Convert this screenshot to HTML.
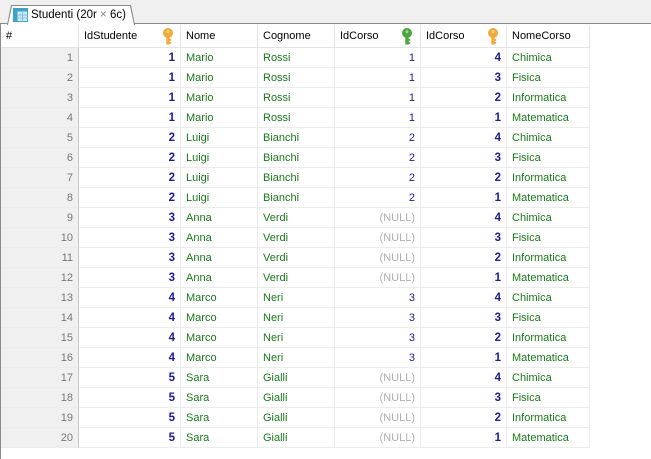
<!DOCTYPE html>
<html><head><meta charset="utf-8"><style>
*{margin:0;padding:0;box-sizing:border-box}
body{width:651px;height:459px;background:#fff;font-family:"Liberation Sans",Arial,sans-serif;font-size:11px;position:relative;overflow:hidden}
#top{position:absolute;left:0;top:0;width:651px;height:24px;background:#f0f0f0;border-bottom:1px solid #8a8a8a}
#tab{position:absolute;left:7px;top:5px;width:128px;height:20px;background:#8a8a8a;clip-path:polygon(4px 0,124px 0,128px 100%,0 100%)}
#tabb{position:absolute;left:8px;top:6px;width:126px;height:19px;background:#fff;clip-path:polygon(4px 0,122px 0,126px 100%,0 100%)}
#tabtxt{position:absolute;left:31px;top:9px;font-size:11.5px;color:#000}
#lb{position:absolute;left:0;top:24px;width:1px;height:435px;background:#8a8a8a}
.c{position:absolute;height:20px;line-height:20px;white-space:nowrap;overflow:hidden;border-right:1px solid #ececec;border-bottom:1px solid #ececec;padding:0 5px}
.h{line-height:22px;color:#000;border-right:1px solid #e4e4e4;border-bottom:1px solid #e4e4e4}
.rn{background:#f0f0f0;text-align:right;color:#777;border-right:1px solid #c8c8c8}
.num{text-align:right;color:#1a1a9a;font-weight:bold;font-size:11.5px}
.n2{text-align:right;color:#1a1a9a}
.g{color:#1a7a1a}
.nul{text-align:right;color:#b0b0b0}
</style></head><body>
<div id="top"></div>
<div id="tab"></div><div id="tabb"></div>
<svg style="position:absolute;left:13px;top:8px" width="15" height="14"><rect x="0.5" y="0.5" width="14" height="13" fill="#cfe8f3" stroke="#3fa3c8"/><rect x="0.5" y="0.5" width="14" height="3" fill="#3fa3c8"/><rect x="0.5" y="0.5" width="4" height="13" fill="#3fa3c8"/><path d="M5 7h10M5 10h10M9.5 4v10" stroke="#7cc3de"/></svg>
<div id="tabtxt">Studenti (20r <span style="color:#888">×</span> 6c)</div>
<div id="lb"></div>
<div id="grid"></div>
<script>
var cols=[[1,79],[79,181],[181,258],[258,335],[335,421],[421,507],[507,590]];
var hd=["#","IdStudente","Nome","Cognome","IdCorso","IdCorso","NomeCorso"];
var nm=[["Mario","Rossi","1"],["Luigi","Bianchi","2"],["Anna","Verdi",null],["Marco","Neri","3"],["Sara","Gialli",null]];
var cs=[["4","Chimica"],["3","Fisica"],["2","Informatica"],["1","Matematica"]];
var h="";
function cell(i,y,hgt,cls,t){var c=cols[i];h+='<div class="c '+cls+'" style="left:'+c[0]+'px;top:'+y+'px;width:'+(c[1]-c[0])+'px;height:'+hgt+'px">'+t+'</div>';}
for(var i=0;i<7;i++)cell(i,25,23,"h",hd[i]);
function key(x,col){h+='<svg style="left:'+x+'px;top:28px;position:absolute" width="12" height="17"><circle cx="6" cy="5" r="5" fill="'+col+'"/><circle cx="6" cy="3.8" r="1.5" fill="#fff" opacity=".5"/><rect x="4.3" y="8" width="3.4" height="8.5" fill="'+col+'"/><rect x="7" y="11" width="2.2" height="1.8" fill="'+col+'"/><rect x="7" y="14" width="2.2" height="1.8" fill="'+col+'"/></svg>';}
key(162,"#f2a93a");key(401,"#4aa83a");key(487,"#f2a93a");
for(var r=0;r<20;r++){var y=48+r*20,p=nm[Math.floor(r/4)],c=cs[r%4];
cell(0,y,20,"rn",r+1);cell(1,y,20,"num",Math.floor(r/4)+1);cell(2,y,20,"g",p[0]);cell(3,y,20,"g",p[1]);
if(p[2])cell(4,y,20,"n2",p[2]);else cell(4,y,20,"nul","(NULL)");
cell(5,y,20,"num",c[0]);cell(6,y,20,"g",c[1]);}
document.getElementById("grid").innerHTML=h;
</script>
</body></html>
